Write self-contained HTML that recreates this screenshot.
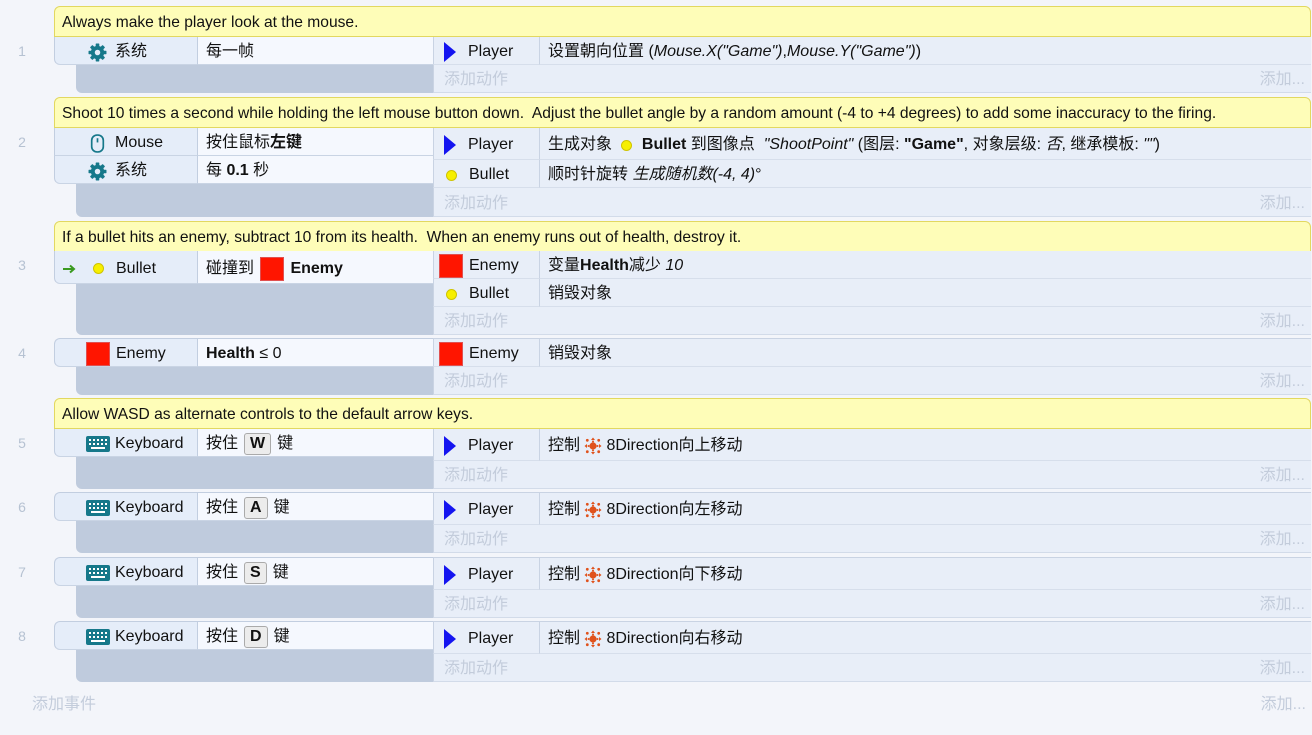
<!DOCTYPE html>
<html><head><meta charset="utf-8"><style>
body{margin:0;width:1312px;height:735px;overflow:hidden;background:#f3f5fa;font:16px/20px "Liberation Sans","Noto Sans CJK SC",sans-serif;color:#111;position:relative}
.a{position:absolute;box-sizing:border-box;white-space:nowrap;line-height:20px}
.n{left:16px;width:12px;text-align:center;color:#b6c2d2;font-size:14px}
.cm{left:54px;width:1257px;height:31px;background:#fefdb8;border:1px solid #e2d860;border-radius:6px 6px 0 0;padding:6px 7px 4px;line-height:20px;font-size:15.6px}
.co,.cp,.ao,.at,.ad{padding-top:3px}
.co{left:54px;width:143px;background:#e5edf9;border-left:1px solid #c2cee0;border-bottom:1px solid #c9d4e4;display:flex;align-items:center;padding-left:33px}
.co.l{border-radius:0 0 0 6px}
.cp{left:197px;width:236px;background:#f5f8fe;border-left:1px solid #c2cee0;border-bottom:1px solid #c9d4e4;display:flex;align-items:center;padding-left:8px}
.gr{left:76px;width:357px;background:#bfcbdd;border-radius:0 0 0 6px}
.ao{left:433px;width:106px;background:#e8eef8;border-left:1px solid #c9d3e3;border-bottom:1px solid #d6deeb;display:flex;align-items:center;padding-left:10px}
.at{left:539px;width:772px;background:#e8eef8;border-left:1px solid #c9d3e3;border-bottom:1px solid #d6deeb;display:flex;align-items:center;padding-left:8px}
.ad{left:433px;width:878px;background:#e8eef8;border-left:1px solid #c9d3e3;border-bottom:1px solid #d2dbe9;color:#c3ccdb;display:flex;align-items:center;padding-left:10px}
.ad span{position:absolute;right:6px}
.ic{width:19px;height:19px;margin-right:8px;flex:none}
.tri{width:0;height:0;border-top:10px solid transparent;border-bottom:10px solid transparent;border-left:12px solid #1414f0;margin-right:12px;flex:none}
.dot{width:11px;height:11px;border-radius:50%;background:#f7ef00;border:1px solid #cfc400;box-sizing:border-box;margin-right:12px;flex:none}
.sq{width:24px;height:24px;background:#ff1500;border:1px solid #e05050;box-sizing:border-box;margin-right:6px;flex:none}
.key{display:inline-block;border:1px solid #aaa;background:#ececec;border-radius:3px;padding:0 5px;font-weight:bold;line-height:20px;margin:0 6px}
i{font-style:italic}
</style></head><body>
<svg width="0" height="0" style="position:absolute"><defs>
<g id="gear"><g fill="#16788a"><circle cx="9" cy="9" r="6.3"/><rect x="7.3" y="0.5" width="3.4" height="17" rx="0.6"/><rect x="7.3" y="0.5" width="3.4" height="17" rx="0.6" transform="rotate(45 9 9)"/><rect x="7.3" y="0.5" width="3.4" height="17" rx="0.6" transform="rotate(90 9 9)"/><rect x="7.3" y="0.5" width="3.4" height="17" rx="0.6" transform="rotate(135 9 9)"/></g><circle cx="9" cy="9" r="2.6" fill="#e5edf9"/></g>
<g id="kb"><rect x="0" y="2" width="24" height="16" rx="2" fill="#16788a"/><g fill="#fff"><rect x="3" y="5" width="2" height="2"/><rect x="7" y="5" width="2" height="2"/><rect x="11" y="5" width="2" height="2"/><rect x="15" y="5" width="2" height="2"/><rect x="19" y="5" width="2" height="2"/><rect x="3" y="9" width="2" height="2"/><rect x="7" y="9" width="2" height="2"/><rect x="11" y="9" width="2" height="2"/><rect x="15" y="9" width="2" height="2"/><rect x="19" y="9" width="2" height="2"/><rect x="5" y="13" width="14" height="2"/></g></g>
<g id="dir" fill="#e0521c"><circle cx="9" cy="9" r="3.6"/><path d="M9 0.5l2 2.5h-4zM9 17.5l2-2.5h-4zM0.5 9l2.5-2v4zM17.5 9l-2.5-2v4z"/><circle cx="3.3" cy="3.3" r="1.4"/><circle cx="14.7" cy="3.3" r="1.4"/><circle cx="3.3" cy="14.7" r="1.4"/><circle cx="14.7" cy="14.7" r="1.4"/><circle cx="9" cy="4.5" r="1"/><circle cx="9" cy="13.5" r="1"/><circle cx="4.5" cy="9" r="1"/><circle cx="13.5" cy="9" r="1"/></g>
</defs></svg>

<!-- Block 1 -->
<div class="a n" style="top:41px">1</div>
<div class="a cm" style="top:6px">Always make the player look at the mouse.</div>
<div class="a co l" style="top:37px;height:28px"><svg class="ic" viewBox="0 0 18 18"><use href="#gear"/></svg>系统</div>
<div class="a cp" style="top:37px;height:28px">每一帧</div>
<div class="a gr" style="top:65px;height:28px"></div>
<div class="a ao" style="top:37px;height:28px"><div class="tri"></div>Player</div>
<div class="a at" style="top:37px;height:28px">设置朝向位置 (<i>Mouse.X("Game")</i>, <i>Mouse.Y("Game")</i>)</div>
<div class="a ad" style="top:65px;height:28px">添加动作<span>添加...</span></div>

<!-- Block 2 -->
<div class="a n" style="top:132px">2</div>
<div class="a cm" style="top:97px">Shoot 10 times a second while holding the left mouse button down.&nbsp; Adjust the bullet angle by a random amount (-4 to +4 degrees) to add some inaccuracy to the firing.</div>
<div class="a co" style="top:128px;height:28px"><svg class="ic" viewBox="0 0 18 18"><rect x="3.5" y="1" width="11" height="16" rx="5" fill="none" stroke="#16788a" stroke-width="1.6"/><rect x="8.2" y="4" width="1.6" height="4" fill="#16788a"/></svg>Mouse</div>
<div class="a cp" style="top:128px;height:28px">按住鼠标<b>左键</b></div>
<div class="a co l" style="top:156px;height:28px"><svg class="ic" viewBox="0 0 18 18"><use href="#gear"/></svg>系统</div>
<div class="a cp" style="top:156px;height:28px">每&nbsp;<b>0.1</b>&nbsp;秒</div>
<div class="a gr" style="top:184px;height:33px"></div>
<div class="a ao" style="top:128px;height:32px"><div class="tri"></div>Player</div>
<div class="a at" style="top:128px;height:32px">生成对象&nbsp;&nbsp;<div class="dot" style="margin-right:10px"></div><b>Bullet</b>&nbsp;到图像点&nbsp;&nbsp;<i>"ShootPoint"</i>&nbsp;(图层: <b>&nbsp;"Game"</b>, 对象层级: <i>&nbsp;否</i>, 继承模板: <i>&nbsp;""</i>)</div>
<div class="a ao" style="top:160px;height:28px;padding-left:12px"><div class="dot"></div>Bullet</div>
<div class="a at" style="top:160px;height:28px">顺时针旋转&nbsp;<i>生成随机数(-4, 4)</i>°</div>
<div class="a ad" style="top:188px;height:29px">添加动作<span>添加...</span></div>

<!-- Block 3 -->
<div class="a n" style="top:255px">3</div>
<div class="a cm" style="top:221px">If a bullet hits an enemy, subtract 10 from its health.&nbsp; When an enemy runs out of health, destroy it.</div>
<div class="a co l" style="top:251px;height:33px;padding-left:8px"><svg style="width:13px;height:10px;margin-right:17px;flex:none" viewBox="0 0 13 10"><path d="M0 5h10M7 1.5l4 3.5-4 3.5" fill="none" stroke="#3a9a20" stroke-width="2"/></svg><div class="dot"></div>Bullet</div>
<div class="a cp" style="top:251px;height:33px">碰撞到&nbsp;<div class="sq" style="margin-left:2px"></div><b>Enemy</b></div>
<div class="a gr" style="top:284px;height:51px"></div>
<div class="a ao" style="top:251px;height:28px;padding-left:5px"><div class="sq"></div>Enemy</div>
<div class="a at" style="top:251px;height:28px">变量<b>Health</b>减少&nbsp;<i>10</i></div>
<div class="a ao" style="top:279px;height:28px;padding-left:12px"><div class="dot"></div>Bullet</div>
<div class="a at" style="top:279px;height:28px">销毁对象</div>
<div class="a ad" style="top:307px;height:28px">添加动作<span>添加...</span></div>

<!-- Block 4 -->
<div class="a n" style="top:343px">4</div>
<div class="a co l" style="top:338px;height:29px;padding-left:31px;border-top:1px solid #c2cee0;border-radius:6px 0 0 6px"><div class="sq"></div>Enemy</div>
<div class="a cp" style="top:338px;height:29px;border-top:1px solid #c2cee0"><b>Health</b>&nbsp;≤ 0</div>
<div class="a gr" style="top:367px;height:28px"></div>
<div class="a ao" style="top:338px;height:29px;padding-left:5px;border-top:1px solid #c9d3e3"><div class="sq"></div>Enemy</div>
<div class="a at" style="top:338px;height:29px;border-top:1px solid #c9d3e3">销毁对象</div>
<div class="a ad" style="top:367px;height:28px">添加动作<span>添加...</span></div>

<!-- Block 5 -->
<div class="a n" style="top:433px">5</div>
<div class="a cm" style="top:398px">Allow WASD as alternate controls to the default arrow keys.</div>
<div class="a co l" style="top:429px;height:28px;padding-left:31px"><svg style="width:24px;height:20px;margin-right:5px;flex:none" viewBox="0 0 24 20"><use href="#kb"/></svg>Keyboard</div>
<div class="a cp" style="top:429px;height:28px">按住<span class="key">W</span>键</div>
<div class="a gr" style="top:457px;height:32px"></div>
<div class="a ao" style="top:429px;height:32px"><div class="tri"></div>Player</div>
<div class="a at" style="top:429px;height:32px">控制&nbsp;<svg style="width:18px;height:18px;margin-right:4px" viewBox="0 0 18 18"><use href="#dir"/></svg>8Direction向上移动</div>
<div class="a ad" style="top:461px;height:28px">添加动作<span>添加...</span></div>

<!-- Block 6 -->
<div class="a n" style="top:497px">6</div>
<div class="a co l" style="top:492px;height:29px;padding-left:31px;border-top:1px solid #c2cee0;border-radius:6px 0 0 6px"><svg style="width:24px;height:20px;margin-right:5px;flex:none" viewBox="0 0 24 20"><use href="#kb"/></svg>Keyboard</div>
<div class="a cp" style="top:492px;height:29px;border-top:1px solid #c2cee0">按住<span class="key">A</span>键</div>
<div class="a gr" style="top:521px;height:32px"></div>
<div class="a ao" style="top:492px;height:33px;border-top:1px solid #c9d3e3"><div class="tri"></div>Player</div>
<div class="a at" style="top:492px;height:33px;border-top:1px solid #c9d3e3">控制&nbsp;<svg style="width:18px;height:18px;margin-right:4px" viewBox="0 0 18 18"><use href="#dir"/></svg>8Direction向左移动</div>
<div class="a ad" style="top:525px;height:28px">添加动作<span>添加...</span></div>

<!-- Block 7 -->
<div class="a n" style="top:562px">7</div>
<div class="a co l" style="top:557px;height:29px;padding-left:31px;border-top:1px solid #c2cee0;border-radius:6px 0 0 6px"><svg style="width:24px;height:20px;margin-right:5px;flex:none" viewBox="0 0 24 20"><use href="#kb"/></svg>Keyboard</div>
<div class="a cp" style="top:557px;height:29px;border-top:1px solid #c2cee0">按住<span class="key">S</span>键</div>
<div class="a gr" style="top:586px;height:32px"></div>
<div class="a ao" style="top:557px;height:33px;border-top:1px solid #c9d3e3"><div class="tri"></div>Player</div>
<div class="a at" style="top:557px;height:33px;border-top:1px solid #c9d3e3">控制&nbsp;<svg style="width:18px;height:18px;margin-right:4px" viewBox="0 0 18 18"><use href="#dir"/></svg>8Direction向下移动</div>
<div class="a ad" style="top:590px;height:28px">添加动作<span>添加...</span></div>

<!-- Block 8 -->
<div class="a n" style="top:626px">8</div>
<div class="a co l" style="top:621px;height:29px;padding-left:31px;border-top:1px solid #c2cee0;border-radius:6px 0 0 6px"><svg style="width:24px;height:20px;margin-right:5px;flex:none" viewBox="0 0 24 20"><use href="#kb"/></svg>Keyboard</div>
<div class="a cp" style="top:621px;height:29px;border-top:1px solid #c2cee0">按住<span class="key">D</span>键</div>
<div class="a gr" style="top:650px;height:32px"></div>
<div class="a ao" style="top:621px;height:33px;border-top:1px solid #c9d3e3"><div class="tri"></div>Player</div>
<div class="a at" style="top:621px;height:33px;border-top:1px solid #c9d3e3">控制&nbsp;<svg style="width:18px;height:18px;margin-right:4px" viewBox="0 0 18 18"><use href="#dir"/></svg>8Direction向右移动</div>
<div class="a ad" style="top:654px;height:28px">添加动作<span>添加...</span></div>

<div class="a" style="left:32px;top:695px;color:#c3ccdb">添加事件</div>
<div class="a" style="right:6px;top:695px;color:#c3ccdb">添加...</div>
</body></html>
